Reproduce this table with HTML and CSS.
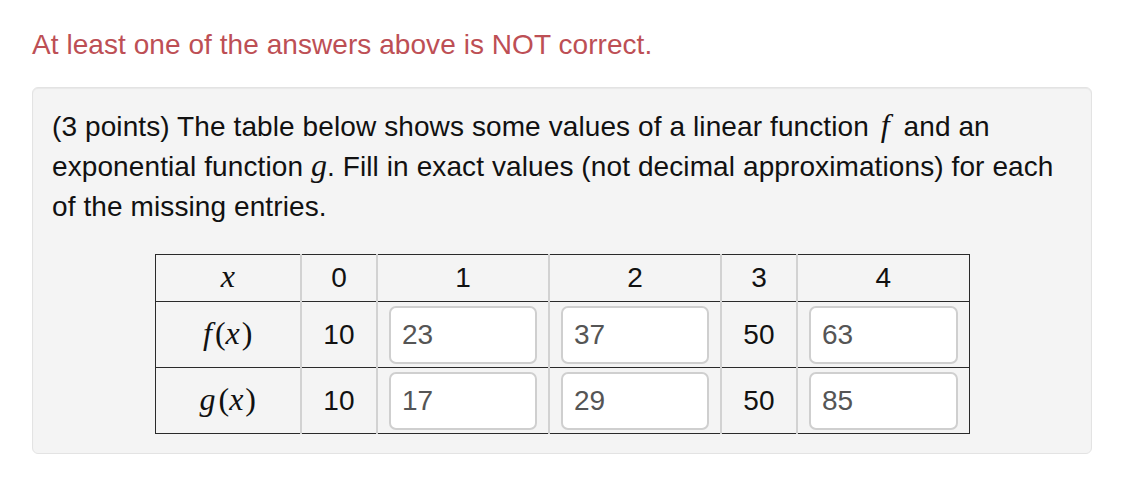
FILE: index.html
```html
<!DOCTYPE html>
<html>
<head>
<meta charset="utf-8">
<link rel="stylesheet" href="styles.css">
</head>
<body>
<div class="page">
  <p class="alert">At least one of the answers above is NOT correct.</p>
  <div class="well">
    <p class="prompt">(3 points) The table below shows some values of a linear function <span class="mi mi-f">f</span> and an exponential function <span class="mi">g</span>. Fill in exact values (not decimal approximations) for each of the missing entries.</p>
    <table class="values">
      <colgroup>
        <col class="c-label">
        <col class="c-num">
        <col class="c-input">
        <col class="c-input">
        <col class="c-num">
        <col class="c-input">
      </colgroup>
      <tr class="head">
        <td class="label"><span class="mi">x</span></td>
        <td>0</td>
        <td>1</td>
        <td>2</td>
        <td>3</td>
        <td>4</td>
      </tr>
      <tr class="data">
        <td class="label"><span class="mi fn">f</span><span class="mo">(</span><span class="mi arg">x</span><span class="mo">)</span></td>
        <td>10</td>
        <td class="entry"><input class="answer" type="text" value="23"></td>
        <td class="entry"><input class="answer" type="text" value="37"></td>
        <td>50</td>
        <td class="entry"><input class="answer" type="text" value="63"></td>
      </tr>
      <tr class="data">
        <td class="label"><span class="mi fn">g</span><span class="mo">(</span><span class="mi arg">x</span><span class="mo">)</span></td>
        <td>10</td>
        <td class="entry"><input class="answer" type="text" value="17"></td>
        <td class="entry"><input class="answer" type="text" value="29"></td>
        <td>50</td>
        <td class="entry"><input class="answer" type="text" value="85"></td>
      </tr>
    </table>
  </div>
</div>
</body>
</html>
```

FILE: styles.css
```css
html, body {
  margin: 0;
  padding: 0;
  background: #ffffff;
}

body {
  font-family: "Liberation Sans", Arial, sans-serif;
  font-size: 28px;
  line-height: 40px;
  letter-spacing: 0.1px;
  color: #111111;
}

.page {
  padding: 25px 30px 0 32px;
}

.alert {
  margin: 0 0 22px 0;
  color: #bd4f55;
  letter-spacing: 0.06px;
}

.well {
  background: #f4f4f4;
  border: 1px solid #e3e3e3;
  border-radius: 6px;
  padding: 19px;
  box-shadow: inset 0 1px 1px rgba(0, 0, 0, 0.05);
}

.prompt {
  margin: 0 0 27px 0;
}

.mi {
  font-family: "Liberation Serif", "Times New Roman", serif;
  font-style: italic;
  font-size: 32px;
  line-height: 1;
  letter-spacing: 0;
}

.mo {
  font-family: "Liberation Serif", "Times New Roman", serif;
  font-size: 32px;
  line-height: 1;
  letter-spacing: 0;
}

.mi-f {
  margin: 0 6px 0 4px;
}

.fn {
  margin-right: 3px;
}

.arg {
  margin-right: 2px;
}

.values {
  margin: 0 auto;
  border-collapse: collapse;
  table-layout: fixed;
  width: 815px;
  border: 1px solid #2a2a2a;
}

.c-label { width: 146px; }
.c-num { width: 76px; }
.c-input { width: 172px; }

.values td {
  text-align: center;
  border-left: 2px solid #d2d2d2;
  border-right: 2px solid #d2d2d2;
  padding: 0;
}

.values td:first-child {
  border-left: 1px solid #2a2a2a;
}

.values td:last-child {
  border-right: 1px solid #2a2a2a;
}

.values tr + tr td {
  border-top: 1px solid #2a2a2a;
}

.head td {
  height: 46px;
}

.values td.entry {
  padding: 4px 11px 3px 11px;
  text-align: left;
}

.answer {
  display: block;
  box-sizing: border-box;
  width: 100%;
  height: 58px;
  margin: 0;
  padding: 0 0 0 11px;
  border: 2px solid #cfcfcf;
  border-radius: 7px;
  background: #ffffff;
  font-family: "Liberation Sans", Arial, sans-serif;
  font-size: 28px;
  color: #555555;
  outline: none;
}
```
